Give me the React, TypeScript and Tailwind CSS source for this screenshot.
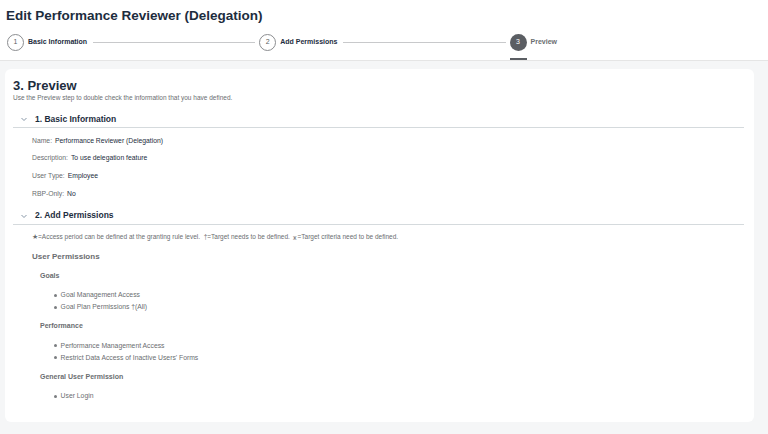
import React from 'react';

const font = { fontFamily: '"Liberation Sans", Arial, sans-serif' };

const Step = ({ n, label, active }: { n: number; label: string; active?: boolean }) => (
  <div className="relative flex items-center gap-[4px] shrink-0">
    <div
      className={`w-[17px] h-[17px] rounded-full flex items-center justify-center text-[7px] ${
        active ? 'bg-[#5b5e63] text-white' : 'border border-[#8b8d90] text-[#5b5e63] bg-white'
      }`}
    >
      {n}
    </div>
    <span className={`text-[7px] font-bold ${active ? 'text-[#6a6d70]' : 'text-[#1d2d3e]'}`}>{label}</span>
    {active && <div className="absolute left-0 top-[24px] w-[17px] h-[2px] bg-[#5b5e63]" />}
  </div>
);

const Section = ({ title }: { title: string }) => (
  <div className="flex items-center gap-[7px] pl-[7px] pb-[2px] border-b border-[#d5dadd] mr-[2px] h-[15px]">
    <svg width="8" height="8" viewBox="0 0 16 16" fill="none" stroke="#556b82" strokeWidth="1.4">
      <path d="M3 6l5 5 5-5" />
    </svg>
    <span className="text-[8.5px] font-bold text-[#1d2d3e]">{title}</span>
  </div>
);

const Field = ({ label, value }: { label: string; value: string }) => (
  <div className="text-[6.8px] h-[17.7px] flex items-center">
    <span className="text-[#6a6d70]">{label}:</span>
    <span className="text-[#1d2d3e] ml-[3px]">{value}</span>
  </div>
);

const Bullets = ({ items }: { items: string[] }) => (
  <ul className="pl-[14px] pt-[8px] pb-[8px] text-[6.8px] text-[#6a6d70]">
    {items.map((it) => (
      <li key={it} className="flex items-center h-[12px] gap-[4px]">
        <span className="w-[2.6px] h-[2.6px] rounded-full bg-[#7a7d80]" />
        <span className="text-[#6a6d70]">{it}</span>
      </li>
    ))}
  </ul>
);

export default function App() {
  return (
    <div className="w-[768px] h-[434px] bg-[#f5f6f7] overflow-hidden" style={font}>
      <div className="bg-white border-b border-[#e5e5e5] h-[61px] px-[6px] pt-[6px]">
        <h1 className="text-[13.5px] font-bold text-[#1d2d3e] leading-[20px]">
          Edit Performance Reviewer (Delegation)
        </h1>
        <div className="flex items-center mt-[8px] pl-[1px] w-[551px]">
          <Step n={1} label="Basic Information" />
          <div className="flex-1 h-px bg-[#c8c9cb] ml-[6px] mr-[4px]" />
          <Step n={2} label="Add Permissions" />
          <div className="flex-1 h-px bg-[#c8c9cb] ml-[6px] mr-[4px]" />
          <Step n={3} label="Preview" active />
        </div>
      </div>

      <div className="mx-[5px] mr-[14px] mt-[8px] bg-white rounded-[6px] px-[8px] pt-[9px] pb-[16px] h-[353px]">
        <div>
          <h2 className="text-[13px] font-bold text-[#1d2d3e] leading-[15px]">3. Preview</h2>
          <p className="text-[6.5px] text-[#6a6d70] leading-[9px]">
            Use the Preview step to double check the information that you have defined.
          </p>
        </div>

        <div className="mt-[11px]">
          <Section title="1. Basic Information" />
          <div className="pl-[19px] pt-[4px]">
            <Field label="Name" value="Performance Reviewer (Delegation)" />
            <Field label="Description" value="To use delegation feature" />
            <Field label="User Type" value="Employee" />
            <Field label="RBP-Only" value="No" />
          </div>
        </div>

        <div className="mt-[7px]">
          <Section title="2. Add Permissions" />
          <div className="pl-[19px] pt-[7px]">
            <p className="text-[6.5px] text-[#6a6d70] leading-[9px]">
              ★=Access period can be defined at the granting rule level.&nbsp; †=Target needs to be defined.&nbsp; ⁎=Target criteria need to be defined.
            </p>
            <h3 className="text-[8px] font-bold text-[#6a6d70] mt-[10px]">User Permissions</h3>
            <div className="pl-[8px]">
              <h4 className="text-[7px] font-bold text-[#6a6d70] mt-[8px]">Goals</h4>
              <Bullets items={['Goal Management Access', 'Goal Plan Permissions †(All)']} />
              <h4 className="text-[7px] font-bold text-[#6a6d70]">Performance</h4>
              <Bullets items={['Performance Management Access', "Restrict Data Access of Inactive Users' Forms"]} />
              <h4 className="text-[7px] font-bold text-[#6a6d70]">General User Permission</h4>
              <Bullets items={['User Login']} />
            </div>
          </div>
        </div>
      </div>
    </div>
  );
}
